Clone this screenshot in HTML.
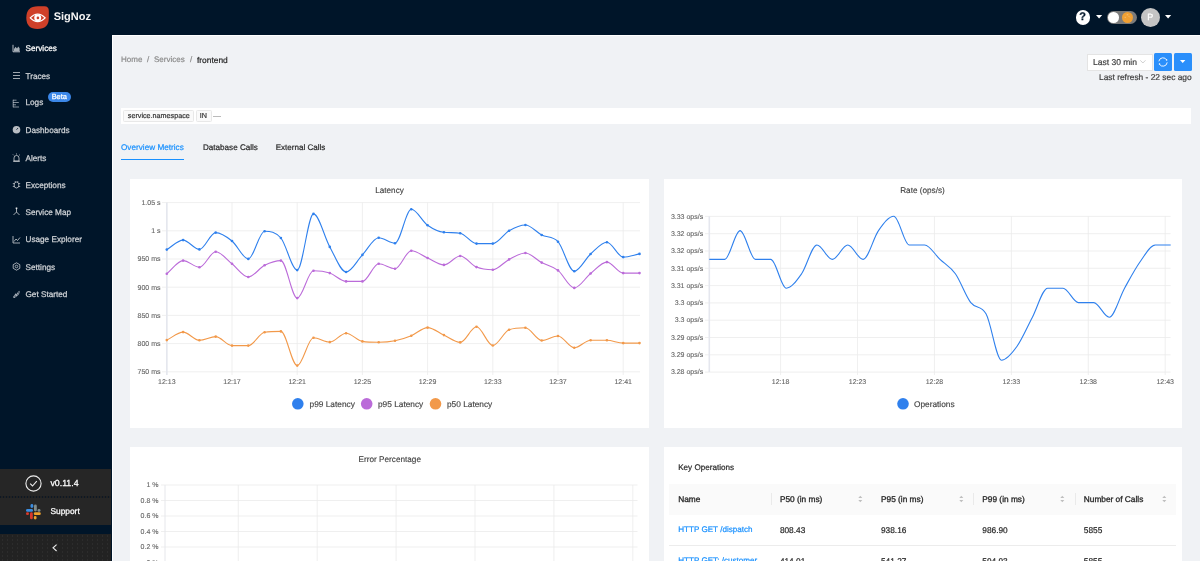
<!DOCTYPE html>
<html><head><meta charset="utf-8">
<style>
*{margin:0;padding:0;box-sizing:border-box}
html,body{width:1200px;height:561px;overflow:hidden;background:#f0f2f5;font-family:"Liberation Sans",sans-serif;}
body{will-change:transform;text-rendering:geometricPrecision}
.txt{-webkit-text-stroke:0.2px currentColor}
.mi span,#side .txt,#hdr .txt{-webkit-text-stroke:0.25px currentColor}
svg text{stroke-width:0.2px}
.abs{position:absolute}
#hdr{position:absolute;left:0;top:0;width:1200px;height:35px;background:#001529}
#side{position:absolute;left:0;top:35px;width:112px;height:526px;background:#001529}
#content{position:absolute;left:112px;top:35px;width:1088px;height:526px;background:#f0f2f5;border-left:1px solid #fff;border-top:1px solid #fff}
.mi{position:absolute;left:0;width:111px;height:20px;color:rgba(255,255,255,0.72);font-size:8.2px;line-height:20px}
.mi span{position:absolute;left:25.5px;top:-0.7px}
.mi svg{position:absolute;left:11.5px;top:3.6px}
.mi.act{color:#fff}
.card{position:absolute;background:#fff}
svg text{font-family:"Liberation Sans",sans-serif}
.ax{font-size:7px;fill:#666;stroke:#666;stroke-width:0.12px}
.lg{font-size:8.3px;fill:#444;stroke:#444;stroke-width:0.15px}
.tt{font-size:8.2px;fill:#404040;stroke:#404040;stroke-width:0.12px}
.txt{position:absolute;white-space:nowrap;line-height:1}
th,td{font-weight:normal}
</style></head><body>
<div id="hdr">
  <!-- logo -->
  <svg class="abs" style="left:26px;top:6px" width="24" height="24" viewBox="0 0 24 24">
    <path d="M12 0.3 L18.5 0.3 Q22.8 0.3 22.8 4.8 L22.8 12 Q22.8 23 11.5 23 Q0.3 23 0.3 11.8 Q0.3 0.3 12 0.3 Z" fill="#cf4029"/>
    <path d="M4.2 11.8 Q11.7 4.2 19.2 11.8 Q11.7 19.4 4.2 11.8 Z" fill="#cf4029" stroke="#fff" stroke-width="1.1"/>
    <circle cx="11.7" cy="11.8" r="3.5" fill="#fff"/>
    <circle cx="11.9" cy="11.9" r="1.3" fill="#cf4029"/>
  </svg>
  <div class="txt" style="left:53.7px;top:12.3px;font-size:11px;font-weight:bold;color:#f4f4f4;-webkit-text-stroke:0">SigNoz</div>
  <!-- right icons -->
  <div class="abs" style="left:1075.7px;top:9.8px;width:14.8px;height:14.8px;border-radius:50%;background:#fff"></div>
  <div class="txt" style="left:1079.2px;top:11.7px;font-size:11px;font-weight:bold;color:#001529">?</div>
  <svg class="abs" style="left:1096px;top:14.5px" width="7" height="4"><path d="M0 0 L6.2 0 L3.1 3.4 Z" fill="#fff"/></svg>
  <div class="abs" style="left:1107px;top:11px;width:30px;height:13px;border-radius:6.5px;background:#7b7b7b"></div>
  <div class="abs" style="left:1108.3px;top:12.2px;width:10.6px;height:10.6px;border-radius:50%;background:#fff"></div>
  <div class="abs" style="left:1122.2px;top:12.2px;width:11px;height:11px;border-radius:50%;background:#f0a033"></div>
  <svg class="abs" style="left:1122.2px;top:12.2px" width="11" height="11" viewBox="0 0 11 11"><path d="M4.7 2.8H6.3M3.2 4.8V6M6.8 4.3L7.8 5.3" stroke="rgba(255,255,255,0.6)" stroke-width="0.6"/></svg>
  <div class="abs" style="left:1141px;top:7.8px;width:19px;height:19px;border-radius:50%;background:#c4c4c4"></div>
  <div class="txt" style="left:1147.3px;top:12.8px;font-size:9px;color:#fff">P</div>
  <svg class="abs" style="left:1165px;top:14.5px" width="7" height="4"><path d="M0 0 L6.2 0 L3.1 3.4 Z" fill="#fff"/></svg>
</div>

<div id="side">
  <div class="mi act" style="top:5.0px"><svg width="9" height="9" viewBox="0 0 9 9"><path d="M1 0.8V7.8H8" stroke="#dfe3e8" stroke-width="0.8" fill="none"/><path d="M2 7.2V5L3.6 2.8L5 4.6L6.3 2.5L7.6 4.2V7.2Z" fill="rgba(220,225,230,0.75)"/></svg><span>Services</span></div>
  <div class="mi" style="top:32.3px"><svg width="9" height="9" viewBox="0 0 9 9"><path d="M1 1.5H8M1 4.5H8M1 7.5H8" stroke="rgba(255,255,255,0.7)" stroke-width="0.9" fill="none"/></svg><span>Traces</span></div>
  <div class="mi" style="top:59px"><svg width="9" height="9" viewBox="0 0 9 9" style="left:11.8px;top:4.5px"><path d="M1.2 0.8V8.2" stroke="rgba(200,205,215,0.55)" stroke-width="1.2"/><path d="M1 1.2H4.5M1 3.5H6.8M1 5.8H4M1 8H7" stroke="rgba(220,225,230,0.75)" stroke-width="0.8" fill="none"/></svg><span>Logs</span></div>
  <div class="abs" style="left:47.5px;top:57px;width:23.5px;height:10px;border-radius:5px;background:#3b87e8;color:#fff;font-size:7.4px;line-height:10px;text-align:center;-webkit-text-stroke:0.25px #fff">Beta</div>
  <div class="mi" style="top:86.9px"><svg width="9" height="9" viewBox="0 0 9 9"><circle cx="4.5" cy="4.7" r="3.8" fill="rgba(255,255,255,0.72)"/><path d="M4.5 4.7 L6 3" stroke="#001529" stroke-width="0.8"/></svg><span>Dashboards</span></div>
  <div class="mi" style="top:114.2px"><svg width="9" height="9" viewBox="0 0 9 9"><path d="M2 8V5 Q2 2.5 4.5 2.5 Q7 2.5 7 5V8Z M1 8.3H8M4.5 0.5V1.5M1 1.5L1.8 2.3M8 1.5L7.2 2.3" stroke="rgba(255,255,255,0.7)" stroke-width="0.9" fill="none"/></svg><span>Alerts</span></div>
  <div class="mi" style="top:141.5px"><svg width="9" height="9" viewBox="0 0 9 9"><ellipse cx="4.5" cy="5" rx="2.4" ry="3" stroke="rgba(255,255,255,0.7)" stroke-width="0.9" fill="none"/><path d="M0.8 3.5H2M7 3.5H8.2M0.8 6.5H2M7 6.5H8.2M3 1L3.5 2M6 1L5.5 2" stroke="rgba(255,255,255,0.7)" stroke-width="0.8"/></svg><span>Exceptions</span></div>
  <div class="mi" style="top:168.8px"><svg width="9" height="9" viewBox="0 0 9 9"><path d="M4.5 1V5M4.5 5L1.5 8M4.5 5L7.5 8" stroke="rgba(255,255,255,0.7)" stroke-width="0.9" fill="none"/><circle cx="4.5" cy="1.3" r="1" fill="rgba(255,255,255,0.7)"/></svg><span>Service Map</span></div>
  <div class="mi" style="top:196.1px"><svg width="9" height="9" viewBox="0 0 9 9"><path d="M1 1V8H8M2 6.5L4 4L5.5 5.5L8 2.5" stroke="rgba(255,255,255,0.7)" stroke-width="0.9" fill="none"/></svg><span>Usage Explorer</span></div>
  <div class="mi" style="top:223.4px"><svg width="9" height="9" viewBox="0 0 9 9"><path d="M4.5 0.8L7.8 2.7V6.3L4.5 8.2L1.2 6.3V2.7Z" stroke="rgba(255,255,255,0.7)" stroke-width="0.9" fill="none"/><circle cx="4.5" cy="4.5" r="1.3" stroke="rgba(255,255,255,0.7)" stroke-width="0.8" fill="none"/></svg><span>Settings</span></div>
  <div class="mi" style="top:250.7px"><svg width="9" height="9" viewBox="0 0 9 9" style="left:11.5px;top:4.6px"><path d="M7.6 0.8Q8 3.5 6.2 5.2L4.8 3.8Q5.5 1.6 7.6 0.8Z" fill="rgba(215,220,228,0.8)"/><path d="M3.8 3.2L5.9 5.4L2.4 7.9Q0.9 8.2 1.2 6.8Z" fill="rgba(215,220,228,0.8)"/><circle cx="6.3" cy="2.8" r="0.6" fill="#001529"/><circle cx="3.1" cy="6.1" r="0.7" fill="#001529"/></svg><span>Get Started</span></div>

  <div class="abs" style="left:0;top:434.4px;width:111px;height:27.5px;background:#262626"></div>
  <div class="abs" style="left:0;top:460.8px;width:111px;height:2px;background:repeating-linear-gradient(90deg,#0e1824 0 1.5px,#222 1.5px 3px)"></div>
  <div class="abs" style="left:0;top:462.8px;width:111px;height:27px;background:#262626"></div>
  <div class="abs" style="left:0;top:499.4px;width:111px;height:27px;background:#222 radial-gradient(circle,rgba(255,255,255,0.045) 0.6px,transparent 0.9px) 0 0/5px 4px"></div>
  <svg class="abs" style="left:24.5px;top:439.7px" width="17" height="17" viewBox="0 0 17 17"><circle cx="8.5" cy="8.5" r="7.6" stroke="#eee" stroke-width="1.1" fill="none"/><path d="M5.2 8.7L7.5 11L11.8 6.2" stroke="#eee" stroke-width="1.1" fill="none"/></svg>
  <div class="txt" style="left:50.4px;top:443.5px;font-size:8.8px;color:#fff">v0.11.4</div>
  <svg class="abs" style="left:25px;top:467.5px" width="17" height="17" viewBox="0 0 17 17">
    <rect x="6.5" y="1" width="2.6" height="7" rx="1.3" fill="#36c5f0" opacity="0"/>
    <rect x="1" y="6" width="7" height="2.8" rx="1.4" fill="#3b8de0"/>
    <rect x="5.5" y="1" width="2.8" height="4" rx="1.4" fill="#3b8de0"/>
    <rect x="9" y="1.5" width="2.8" height="7" rx="1.4" fill="#7f8c8d"/>
    <rect x="12.5" y="6" width="3" height="2.8" rx="1.4" fill="#7f8c8d"/>
    <rect x="1" y="9.3" width="3" height="2.8" rx="1.4" fill="#d8392b"/>
    <rect x="5" y="9.3" width="2.8" height="7" rx="1.4" fill="#d8392b"/>
    <rect x="8.8" y="9.3" width="7" height="2.8" rx="1.4" fill="#eea12b"/>
    <rect x="8.8" y="13" width="2.8" height="3.5" rx="1.4" fill="#eea12b"/>
  </svg>
  <div class="txt" style="left:50.4px;top:471.5px;font-size:8.4px;color:#fff">Support</div>
  <svg class="abs" style="left:52.3px;top:508.8px" width="6" height="8"><path d="M4.6 0.6L1.1 3.8L4.6 7" stroke="#e8e8e8" stroke-width="1.15" fill="none"/></svg>
</div>

<div id="content"></div>

<!-- breadcrumb -->
<div class="txt" style="left:121px;top:55.5px;font-size:8px;color:#8c8c8c">Home</div>
<div class="txt" style="left:147px;top:55.5px;font-size:8px;color:#8c8c8c">/</div>
<div class="txt" style="left:154px;top:55.5px;font-size:8px;color:#8c8c8c">Services</div>
<div class="txt" style="left:190px;top:55.5px;font-size:8px;color:#8c8c8c">/</div>
<div class="txt" style="left:197px;top:55.5px;font-size:8.4px;color:#262626">frontend</div>

<!-- time picker -->
<div class="abs" style="left:1087px;top:53.6px;width:66px;height:17px;background:#fff;border:1px solid #e4e4e4"></div>
<div class="txt" style="left:1093px;top:57.5px;font-size:8.5px;color:#404040">Last 30 min</div>
<svg class="abs" style="left:1140px;top:60px" width="6" height="4"><path d="M0.3 0.3L2.9 3L5.5 0.3" stroke="#bbb" stroke-width="0.7" fill="none"/></svg>
<div class="abs" style="left:1154px;top:52.8px;width:18px;height:18.2px;background:#2a8ffb;border-radius:1.5px"></div>
<svg class="abs" style="left:1158.4px;top:57.3px" width="10" height="10" viewBox="0 0 10 10"><path d="M0.86 4.27 A4.2 4.2 0 0 1 8.71 3.03 M9.18 5.37 A4.2 4.2 0 0 1 1.36 7.1" stroke="#fff" stroke-width="0.9" fill="none"/><circle cx="8.6" cy="3.1" r="0.75" fill="#fff"/><circle cx="1.5" cy="7" r="0.75" fill="#fff"/></svg>
<div class="abs" style="left:1173.9px;top:52.8px;width:18px;height:18.2px;background:#2a8ffb;border-radius:1.5px"></div>
<svg class="abs" style="left:1180px;top:60px" width="6" height="4"><path d="M0 0 L5.4 0 L2.7 3 Z" fill="#fff"/></svg>
<div class="txt" style="left:1099px;top:73.3px;font-size:8.4px;color:#404040">Last refresh - 22 sec ago</div>

<!-- filter bar -->
<div class="abs" style="left:121px;top:108px;width:1070px;height:16px;background:#fff"></div>
<div class="abs" style="left:123.3px;top:110px;width:71px;height:12px;background:#fafafa;border:1px solid #e8e8e8;border-radius:1.5px"></div>
<div class="txt" style="left:127.8px;top:112.4px;font-size:7.2px;color:#333">service.namespace</div>
<div class="abs" style="left:195.5px;top:110px;width:16px;height:12px;background:#fafafa;border:1px solid #e8e8e8;border-radius:1.5px"></div>
<div class="txt" style="left:199.8px;top:112.4px;font-size:7.2px;color:#333">IN</div>
<div class="abs" style="left:212.5px;top:115.6px;width:8.5px;height:0.8px;background:#bbb"></div>

<!-- tabs -->
<div class="txt" style="left:121px;top:144px;font-size:8.2px;color:#1890ff">Overview Metrics</div>
<div class="txt" style="left:203px;top:144px;font-size:8.1px;color:#262626">Database Calls</div>
<div class="txt" style="left:275.7px;top:144px;font-size:8.05px;color:#262626">External Calls</div>
<div class="abs" style="left:121px;top:158.5px;width:63.2px;height:1.5px;background:#1890ff"></div>

<!-- cards -->
<div class="card" style="left:130px;top:179px;width:519px;height:249px"></div>
<div class="card" style="left:664px;top:179px;width:518px;height:249px"></div>
<div class="card" style="left:130px;top:447px;width:519px;height:120px"></div>
<div class="card" style="left:664px;top:447px;width:518px;height:120px"></div>

<svg class="abs" style="left:0;top:0" width="1200" height="561">
<line x1="162" y1="202.6" x2="640" y2="202.6" stroke="#ebebeb" stroke-width="0.8"/>
<text x="160.5" y="204.9" class="ax" text-anchor="end">1.05 s</text>
<line x1="162" y1="230.8" x2="640" y2="230.8" stroke="#ebebeb" stroke-width="0.8"/>
<text x="160.5" y="233.1" class="ax" text-anchor="end">1 s</text>
<line x1="162" y1="259" x2="640" y2="259" stroke="#ebebeb" stroke-width="0.8"/>
<text x="160.5" y="261.3" class="ax" text-anchor="end">950 ms</text>
<line x1="162" y1="287.2" x2="640" y2="287.2" stroke="#ebebeb" stroke-width="0.8"/>
<text x="160.5" y="289.5" class="ax" text-anchor="end">900 ms</text>
<line x1="162" y1="315.4" x2="640" y2="315.4" stroke="#ebebeb" stroke-width="0.8"/>
<text x="160.5" y="317.7" class="ax" text-anchor="end">850 ms</text>
<line x1="162" y1="343.6" x2="640" y2="343.6" stroke="#ebebeb" stroke-width="0.8"/>
<text x="160.5" y="345.9" class="ax" text-anchor="end">800 ms</text>
<line x1="162" y1="371.8" x2="640" y2="371.8" stroke="#ebebeb" stroke-width="0.8"/>
<text x="160.5" y="374.1" class="ax" text-anchor="end">750 ms</text>
<line x1="166.8" y1="202.6" x2="166.8" y2="375" stroke="#ebebeb" stroke-width="0.8"/>
<text x="166.8" y="384" class="ax" text-anchor="middle">12:13</text>
<line x1="232" y1="202.6" x2="232" y2="375" stroke="#ebebeb" stroke-width="0.8"/>
<text x="232" y="384" class="ax" text-anchor="middle">12:17</text>
<line x1="297.2" y1="202.6" x2="297.2" y2="375" stroke="#ebebeb" stroke-width="0.8"/>
<text x="297.2" y="384" class="ax" text-anchor="middle">12:21</text>
<line x1="362.4" y1="202.6" x2="362.4" y2="375" stroke="#ebebeb" stroke-width="0.8"/>
<text x="362.4" y="384" class="ax" text-anchor="middle">12:25</text>
<line x1="427.6" y1="202.6" x2="427.6" y2="375" stroke="#ebebeb" stroke-width="0.8"/>
<text x="427.6" y="384" class="ax" text-anchor="middle">12:29</text>
<line x1="492.8" y1="202.6" x2="492.8" y2="375" stroke="#ebebeb" stroke-width="0.8"/>
<text x="492.8" y="384" class="ax" text-anchor="middle">12:33</text>
<line x1="558" y1="202.6" x2="558" y2="375" stroke="#ebebeb" stroke-width="0.8"/>
<text x="558" y="384" class="ax" text-anchor="middle">12:37</text>
<line x1="623.2" y1="202.6" x2="623.2" y2="375" stroke="#ebebeb" stroke-width="0.8"/>
<text x="623.2" y="384" class="ax" text-anchor="middle">12:41</text>
<line x1="166.8" y1="202.6" x2="166.8" y2="375" stroke="#e5e7ee" stroke-width="1.6"/>
<path d="M166.80 340.10 C172.23 337.43 177.67 332.10 183.10 332.10 C188.53 332.10 193.97 340.30 199.40 340.30 C204.83 340.30 210.27 336.60 215.70 336.60 C221.13 336.60 226.57 345.60 232.00 345.60 C237.43 345.60 242.87 345.60 248.30 345.60 C253.73 345.60 259.17 333.20 264.60 332.30 C270.03 331.40 275.47 331.40 280.90 331.40 C286.33 331.40 291.77 365.60 297.20 365.60 C302.63 365.60 308.07 337.80 313.50 337.80 C318.93 337.80 324.37 342.10 329.80 342.10 C335.23 342.10 340.67 333.20 346.10 333.20 C351.53 333.20 356.97 340.50 362.40 341.40 C367.83 342.30 373.27 342.30 378.70 342.30 C384.13 342.30 389.57 341.90 395.00 340.80 C400.43 339.70 405.87 337.90 411.30 335.70 C416.73 333.50 422.17 327.60 427.60 327.60 C433.03 327.60 438.47 332.63 443.90 335.10 C449.33 337.57 454.77 342.40 460.20 342.40 C465.63 342.40 471.07 326.80 476.50 326.80 C481.93 326.80 487.37 345.50 492.80 345.50 C498.23 345.50 503.67 331.80 509.10 329.80 C514.53 327.80 519.97 327.80 525.40 327.80 C530.83 327.80 536.27 340.50 541.70 340.50 C547.13 340.50 552.57 336.00 558.00 336.00 C563.43 336.00 568.87 347.80 574.30 347.80 C579.73 347.80 585.17 340.30 590.60 340.30 C596.03 340.30 601.47 340.30 606.90 340.30 C612.33 340.30 617.77 343.10 623.20 343.10 C628.63 343.10 634.07 343.10 639.50 343.10" fill="none" stroke="#F2994A" stroke-width="1.1"/>
<circle cx="166.8" cy="340.1" r="1.3" fill="#F2994A"/>
<circle cx="183.1" cy="332.1" r="1.3" fill="#F2994A"/>
<circle cx="199.4" cy="340.3" r="1.3" fill="#F2994A"/>
<circle cx="215.7" cy="336.6" r="1.3" fill="#F2994A"/>
<circle cx="232" cy="345.6" r="1.3" fill="#F2994A"/>
<circle cx="248.3" cy="345.6" r="1.3" fill="#F2994A"/>
<circle cx="264.6" cy="332.3" r="1.3" fill="#F2994A"/>
<circle cx="280.9" cy="331.4" r="1.3" fill="#F2994A"/>
<circle cx="297.2" cy="365.6" r="1.3" fill="#F2994A"/>
<circle cx="313.5" cy="337.8" r="1.3" fill="#F2994A"/>
<circle cx="329.8" cy="342.1" r="1.3" fill="#F2994A"/>
<circle cx="346.1" cy="333.2" r="1.3" fill="#F2994A"/>
<circle cx="362.4" cy="341.4" r="1.3" fill="#F2994A"/>
<circle cx="378.7" cy="342.3" r="1.3" fill="#F2994A"/>
<circle cx="395" cy="340.8" r="1.3" fill="#F2994A"/>
<circle cx="411.3" cy="335.7" r="1.3" fill="#F2994A"/>
<circle cx="427.6" cy="327.6" r="1.3" fill="#F2994A"/>
<circle cx="443.9" cy="335.1" r="1.3" fill="#F2994A"/>
<circle cx="460.2" cy="342.4" r="1.3" fill="#F2994A"/>
<circle cx="476.5" cy="326.8" r="1.3" fill="#F2994A"/>
<circle cx="492.8" cy="345.5" r="1.3" fill="#F2994A"/>
<circle cx="509.1" cy="329.8" r="1.3" fill="#F2994A"/>
<circle cx="525.4" cy="327.8" r="1.3" fill="#F2994A"/>
<circle cx="541.7" cy="340.5" r="1.3" fill="#F2994A"/>
<circle cx="558" cy="336" r="1.3" fill="#F2994A"/>
<circle cx="574.3" cy="347.8" r="1.3" fill="#F2994A"/>
<circle cx="590.6" cy="340.3" r="1.3" fill="#F2994A"/>
<circle cx="606.9" cy="340.3" r="1.3" fill="#F2994A"/>
<circle cx="623.2" cy="343.1" r="1.3" fill="#F2994A"/>
<circle cx="639.5" cy="343.1" r="1.3" fill="#F2994A"/>
<path d="M166.80 273.70 C172.23 269.33 177.67 260.60 183.10 260.60 C188.53 260.60 193.97 267.20 199.40 267.20 C204.83 267.20 210.27 251.70 215.70 251.70 C221.13 251.70 226.57 259.58 232.00 263.80 C237.43 268.02 242.87 277.00 248.30 277.00 C253.73 277.00 259.17 268.03 264.60 265.30 C270.03 262.57 275.47 260.60 280.90 260.60 C286.33 260.60 291.77 298.10 297.20 298.10 C302.63 298.10 308.07 270.80 313.50 270.80 C318.93 270.80 324.37 271.33 329.80 273.10 C335.23 274.87 340.67 281.40 346.10 281.40 C351.53 281.40 356.97 281.40 362.40 281.40 C367.83 281.40 373.27 263.80 378.70 263.80 C384.13 263.80 389.57 268.70 395.00 268.70 C400.43 268.70 405.87 250.70 411.30 250.70 C416.73 250.70 422.17 255.63 427.60 258.00 C433.03 260.37 438.47 264.90 443.90 264.90 C449.33 264.90 454.77 256.00 460.20 256.00 C465.63 256.00 471.07 264.82 476.50 267.10 C481.93 269.38 487.37 269.70 492.80 269.70 C498.23 269.70 503.67 262.18 509.10 259.40 C514.53 256.62 519.97 253.00 525.40 253.00 C530.83 253.00 536.27 259.70 541.70 262.60 C547.13 265.50 552.57 266.18 558.00 270.40 C563.43 274.62 568.87 287.90 574.30 287.90 C579.73 287.90 585.17 277.80 590.60 273.50 C596.03 269.20 601.47 262.10 606.90 262.10 C612.33 262.10 617.77 273.10 623.20 273.10 C628.63 273.10 634.07 273.10 639.50 273.10" fill="none" stroke="#BB6BD9" stroke-width="1.1"/>
<circle cx="166.8" cy="273.7" r="1.3" fill="#BB6BD9"/>
<circle cx="183.1" cy="260.6" r="1.3" fill="#BB6BD9"/>
<circle cx="199.4" cy="267.2" r="1.3" fill="#BB6BD9"/>
<circle cx="215.7" cy="251.7" r="1.3" fill="#BB6BD9"/>
<circle cx="232" cy="263.8" r="1.3" fill="#BB6BD9"/>
<circle cx="248.3" cy="277" r="1.3" fill="#BB6BD9"/>
<circle cx="264.6" cy="265.3" r="1.3" fill="#BB6BD9"/>
<circle cx="280.9" cy="260.6" r="1.3" fill="#BB6BD9"/>
<circle cx="297.2" cy="298.1" r="1.3" fill="#BB6BD9"/>
<circle cx="313.5" cy="270.8" r="1.3" fill="#BB6BD9"/>
<circle cx="329.8" cy="273.1" r="1.3" fill="#BB6BD9"/>
<circle cx="346.1" cy="281.4" r="1.3" fill="#BB6BD9"/>
<circle cx="362.4" cy="281.4" r="1.3" fill="#BB6BD9"/>
<circle cx="378.7" cy="263.8" r="1.3" fill="#BB6BD9"/>
<circle cx="395" cy="268.7" r="1.3" fill="#BB6BD9"/>
<circle cx="411.3" cy="250.7" r="1.3" fill="#BB6BD9"/>
<circle cx="427.6" cy="258" r="1.3" fill="#BB6BD9"/>
<circle cx="443.9" cy="264.9" r="1.3" fill="#BB6BD9"/>
<circle cx="460.2" cy="256" r="1.3" fill="#BB6BD9"/>
<circle cx="476.5" cy="267.1" r="1.3" fill="#BB6BD9"/>
<circle cx="492.8" cy="269.7" r="1.3" fill="#BB6BD9"/>
<circle cx="509.1" cy="259.4" r="1.3" fill="#BB6BD9"/>
<circle cx="525.4" cy="253" r="1.3" fill="#BB6BD9"/>
<circle cx="541.7" cy="262.6" r="1.3" fill="#BB6BD9"/>
<circle cx="558" cy="270.4" r="1.3" fill="#BB6BD9"/>
<circle cx="574.3" cy="287.9" r="1.3" fill="#BB6BD9"/>
<circle cx="590.6" cy="273.5" r="1.3" fill="#BB6BD9"/>
<circle cx="606.9" cy="262.1" r="1.3" fill="#BB6BD9"/>
<circle cx="623.2" cy="273.1" r="1.3" fill="#BB6BD9"/>
<circle cx="639.5" cy="273.1" r="1.3" fill="#BB6BD9"/>
<path d="M166.80 249.60 C172.23 246.43 177.67 240.10 183.10 240.10 C188.53 240.10 193.97 249.40 199.40 249.40 C204.83 249.40 210.27 232.60 215.70 232.60 C221.13 232.60 226.57 236.62 232.00 241.00 C237.43 245.38 242.87 258.90 248.30 258.90 C253.73 258.90 259.17 231.20 264.60 231.20 C270.03 231.20 275.47 231.52 280.90 238.00 C286.33 244.48 291.77 270.10 297.20 270.10 C302.63 270.10 308.07 213.90 313.50 213.90 C318.93 213.90 324.37 237.22 329.80 246.90 C335.23 256.58 340.67 272.00 346.10 272.00 C351.53 272.00 356.97 260.60 362.40 254.90 C367.83 249.20 373.27 237.80 378.70 237.80 C384.13 237.80 389.57 243.20 395.00 243.20 C400.43 243.20 405.87 209.30 411.30 209.30 C416.73 209.30 422.17 221.47 427.60 225.30 C433.03 229.13 438.47 231.78 443.90 232.30 C449.33 232.82 454.77 232.46 460.20 233.20 C465.63 233.94 471.07 243.60 476.50 243.60 C481.93 243.60 487.37 243.60 492.80 243.60 C498.23 243.60 503.67 233.80 509.10 230.70 C514.53 227.60 519.97 225.00 525.40 225.00 C530.83 225.00 536.27 232.22 541.70 235.00 C547.13 237.78 552.57 235.67 558.00 241.70 C563.43 247.73 568.87 271.20 574.30 271.20 C579.73 271.20 585.17 258.82 590.60 254.00 C596.03 249.18 601.47 242.30 606.90 242.30 C612.33 242.30 617.77 257.10 623.20 257.10 C628.63 257.10 634.07 254.97 639.50 253.90" fill="none" stroke="#2F80ED" stroke-width="1.1"/>
<circle cx="166.8" cy="249.6" r="1.3" fill="#2F80ED"/>
<circle cx="183.1" cy="240.1" r="1.3" fill="#2F80ED"/>
<circle cx="199.4" cy="249.4" r="1.3" fill="#2F80ED"/>
<circle cx="215.7" cy="232.6" r="1.3" fill="#2F80ED"/>
<circle cx="232" cy="241" r="1.3" fill="#2F80ED"/>
<circle cx="248.3" cy="258.9" r="1.3" fill="#2F80ED"/>
<circle cx="264.6" cy="231.2" r="1.3" fill="#2F80ED"/>
<circle cx="280.9" cy="238" r="1.3" fill="#2F80ED"/>
<circle cx="297.2" cy="270.1" r="1.3" fill="#2F80ED"/>
<circle cx="313.5" cy="213.9" r="1.3" fill="#2F80ED"/>
<circle cx="329.8" cy="246.9" r="1.3" fill="#2F80ED"/>
<circle cx="346.1" cy="272" r="1.3" fill="#2F80ED"/>
<circle cx="362.4" cy="254.9" r="1.3" fill="#2F80ED"/>
<circle cx="378.7" cy="237.8" r="1.3" fill="#2F80ED"/>
<circle cx="395" cy="243.2" r="1.3" fill="#2F80ED"/>
<circle cx="411.3" cy="209.3" r="1.3" fill="#2F80ED"/>
<circle cx="427.6" cy="225.3" r="1.3" fill="#2F80ED"/>
<circle cx="443.9" cy="232.3" r="1.3" fill="#2F80ED"/>
<circle cx="460.2" cy="233.2" r="1.3" fill="#2F80ED"/>
<circle cx="476.5" cy="243.6" r="1.3" fill="#2F80ED"/>
<circle cx="492.8" cy="243.6" r="1.3" fill="#2F80ED"/>
<circle cx="509.1" cy="230.7" r="1.3" fill="#2F80ED"/>
<circle cx="525.4" cy="225" r="1.3" fill="#2F80ED"/>
<circle cx="541.7" cy="235" r="1.3" fill="#2F80ED"/>
<circle cx="558" cy="241.7" r="1.3" fill="#2F80ED"/>
<circle cx="574.3" cy="271.2" r="1.3" fill="#2F80ED"/>
<circle cx="590.6" cy="254" r="1.3" fill="#2F80ED"/>
<circle cx="606.9" cy="242.3" r="1.3" fill="#2F80ED"/>
<circle cx="623.2" cy="257.1" r="1.3" fill="#2F80ED"/>
<circle cx="639.5" cy="253.9" r="1.3" fill="#2F80ED"/>
<circle cx="297.8" cy="403.8" r="5.8" fill="#2F80ED"/>
<text x="309.6" y="407" class="lg">p99 Latency</text>
<circle cx="366.7" cy="403.8" r="5.8" fill="#BB6BD9"/>
<text x="378" y="407" class="lg">p95 Latency</text>
<circle cx="435.5" cy="403.8" r="5.8" fill="#F2994A"/>
<text x="447" y="407" class="lg">p50 Latency</text>
<text x="389.5" y="192.8" class="tt" text-anchor="middle">Latency</text>
<line x1="705" y1="216.4" x2="1170.6" y2="216.4" stroke="#ebebeb" stroke-width="0.8"/>
<text x="703.2" y="218.6" class="ax" text-anchor="end">3.33 ops/s</text>
<line x1="705" y1="233.7" x2="1170.6" y2="233.7" stroke="#ebebeb" stroke-width="0.8"/>
<text x="703.2" y="235.9" class="ax" text-anchor="end">3.32 ops/s</text>
<line x1="705" y1="251" x2="1170.6" y2="251" stroke="#ebebeb" stroke-width="0.8"/>
<text x="703.2" y="253.2" class="ax" text-anchor="end">3.32 ops/s</text>
<line x1="705" y1="268.3" x2="1170.6" y2="268.3" stroke="#ebebeb" stroke-width="0.8"/>
<text x="703.2" y="270.5" class="ax" text-anchor="end">3.31 ops/s</text>
<line x1="705" y1="285.6" x2="1170.6" y2="285.6" stroke="#ebebeb" stroke-width="0.8"/>
<text x="703.2" y="287.8" class="ax" text-anchor="end">3.31 ops/s</text>
<line x1="705" y1="302.9" x2="1170.6" y2="302.9" stroke="#ebebeb" stroke-width="0.8"/>
<text x="703.2" y="305.1" class="ax" text-anchor="end">3.3 ops/s</text>
<line x1="705" y1="320.2" x2="1170.6" y2="320.2" stroke="#ebebeb" stroke-width="0.8"/>
<text x="703.2" y="322.4" class="ax" text-anchor="end">3.3 ops/s</text>
<line x1="705" y1="337.5" x2="1170.6" y2="337.5" stroke="#ebebeb" stroke-width="0.8"/>
<text x="703.2" y="339.7" class="ax" text-anchor="end">3.29 ops/s</text>
<line x1="705" y1="354.8" x2="1170.6" y2="354.8" stroke="#ebebeb" stroke-width="0.8"/>
<text x="703.2" y="357" class="ax" text-anchor="end">3.29 ops/s</text>
<line x1="705" y1="372.1" x2="1170.6" y2="372.1" stroke="#ebebeb" stroke-width="0.8"/>
<text x="703.2" y="374.3" class="ax" text-anchor="end">3.28 ops/s</text>
<line x1="780.6" y1="216.4" x2="780.6" y2="375" stroke="#ebebeb" stroke-width="0.8"/>
<text x="780.6" y="384" class="ax" text-anchor="middle">12:18</text>
<line x1="857.52" y1="216.4" x2="857.52" y2="375" stroke="#ebebeb" stroke-width="0.8"/>
<text x="857.52" y="384" class="ax" text-anchor="middle">12:23</text>
<line x1="934.44" y1="216.4" x2="934.44" y2="375" stroke="#ebebeb" stroke-width="0.8"/>
<text x="934.44" y="384" class="ax" text-anchor="middle">12:28</text>
<line x1="1011.36" y1="216.4" x2="1011.36" y2="375" stroke="#ebebeb" stroke-width="0.8"/>
<text x="1011.36" y="384" class="ax" text-anchor="middle">12:33</text>
<line x1="1088.28" y1="216.4" x2="1088.28" y2="375" stroke="#ebebeb" stroke-width="0.8"/>
<text x="1088.28" y="384" class="ax" text-anchor="middle">12:38</text>
<line x1="1165.2" y1="216.4" x2="1165.2" y2="375" stroke="#ebebeb" stroke-width="0.8"/>
<text x="1165.2" y="384" class="ax" text-anchor="middle">12:43</text>
<line x1="709.3" y1="216.4" x2="709.3" y2="372" stroke="#e5e7ee" stroke-width="1.6"/>
<path d="M709.30 259.40 C714.43 259.40 719.55 259.40 724.68 259.40 C729.81 259.40 734.93 230.60 740.06 230.60 C745.19 230.60 750.31 259.40 755.44 259.40 C760.57 259.40 765.69 259.40 770.82 259.40 C775.95 259.40 781.07 288.20 786.20 288.20 C791.33 288.20 796.45 281.00 801.58 273.80 C806.71 266.60 811.83 245.00 816.96 245.00 C822.09 245.00 827.21 259.40 832.34 259.40 C837.47 259.40 842.59 245.00 847.72 245.00 C852.85 245.00 857.97 259.40 863.10 259.40 C868.23 259.40 873.35 237.80 878.48 230.60 C883.61 223.40 888.73 216.20 893.86 216.20 C898.99 216.20 904.11 245.00 909.24 245.00 C914.37 245.00 919.49 245.00 924.62 245.00 C929.75 245.00 934.87 254.60 940.00 259.40 C945.13 264.20 950.25 266.60 955.38 273.80 C960.51 281.00 965.63 296.08 970.76 302.60 C975.89 309.12 981.01 304.65 986.14 314.00 C991.27 323.35 996.39 360.20 1001.52 360.20 C1006.65 360.20 1011.77 353.62 1016.90 346.50 C1022.03 339.38 1027.15 327.22 1032.28 317.50 C1037.41 307.78 1042.53 288.20 1047.66 288.20 C1052.79 288.20 1057.91 288.20 1063.04 288.20 C1068.17 288.20 1073.29 302.60 1078.42 302.60 C1083.55 302.60 1088.67 302.60 1093.80 302.60 C1098.93 302.60 1104.05 317.20 1109.18 317.20 C1114.31 317.20 1119.43 297.40 1124.56 288.20 C1129.69 279.00 1134.81 269.20 1139.94 262.00 C1145.07 254.80 1150.19 245.00 1155.32 245.00 C1160.45 245.00 1165.57 245.00 1170.70 245.00" fill="none" stroke="#2F80ED" stroke-width="1.1"/>
<circle cx="903" cy="403.8" r="5.8" fill="#2F80ED"/>
<text x="914" y="407" class="lg">Operations</text>
<text x="922.5" y="192.8" class="tt" text-anchor="middle">Rate (ops/s)</text>
<line x1="161" y1="485" x2="637.5" y2="485" stroke="#ebebeb" stroke-width="0.8"/>
<text x="158.5" y="487.3" class="ax" text-anchor="end">1 %</text>
<line x1="161" y1="500.5" x2="637.5" y2="500.5" stroke="#ebebeb" stroke-width="0.8"/>
<text x="158.5" y="502.8" class="ax" text-anchor="end">0.8 %</text>
<line x1="161" y1="516" x2="637.5" y2="516" stroke="#ebebeb" stroke-width="0.8"/>
<text x="158.5" y="518.3" class="ax" text-anchor="end">0.6 %</text>
<line x1="161" y1="531.5" x2="637.5" y2="531.5" stroke="#ebebeb" stroke-width="0.8"/>
<text x="158.5" y="533.8" class="ax" text-anchor="end">0.4 %</text>
<line x1="161" y1="547" x2="637.5" y2="547" stroke="#ebebeb" stroke-width="0.8"/>
<text x="158.5" y="549.3" class="ax" text-anchor="end">0.2 %</text>
<line x1="161" y1="562.5" x2="637.5" y2="562.5" stroke="#ebebeb" stroke-width="0.8"/>
<text x="158.5" y="564.8" class="ax" text-anchor="end">0 %</text>
<line x1="238.3" y1="485" x2="238.3" y2="561" stroke="#ebebeb" stroke-width="0.8"/>
<line x1="317.2" y1="485" x2="317.2" y2="561" stroke="#ebebeb" stroke-width="0.8"/>
<line x1="396.1" y1="485" x2="396.1" y2="561" stroke="#ebebeb" stroke-width="0.8"/>
<line x1="475" y1="485" x2="475" y2="561" stroke="#ebebeb" stroke-width="0.8"/>
<line x1="553.9" y1="485" x2="553.9" y2="561" stroke="#ebebeb" stroke-width="0.8"/>
<line x1="632.8" y1="485" x2="632.8" y2="561" stroke="#ebebeb" stroke-width="0.8"/>
<line x1="165" y1="485" x2="165" y2="561" stroke="#e6e7eb" stroke-width="1"/>
<text x="389.8" y="462" class="tt" text-anchor="middle">Error Percentage</text>
</svg>

<!-- key operations table -->
<div class="txt" style="left:678.2px;top:463.8px;font-size:8.1px;color:#262626">Key Operations</div>
<div class="abs" style="left:669px;top:483.6px;width:507px;height:31.5px;background:#fafafa"></div>
<div class="abs" style="left:770.7px;top:493px;width:0.8px;height:12px;background:#eaeaea"></div>
<div class="abs" style="left:972.9px;top:493px;width:0.8px;height:12px;background:#eaeaea"></div>
<div class="abs" style="left:1075px;top:493px;width:0.8px;height:12px;background:#eaeaea"></div>
<div class="abs" style="left:669px;top:545.3px;width:507px;height:0.8px;background:#ececec"></div>
<div class="txt" style="left:678.2px;top:494.8px;font-size:8.3px;color:#262626;-webkit-text-stroke:0.3px #262626">Name</div>
<div class="txt" style="left:779.9px;top:494.8px;font-size:8.3px;color:#262626;-webkit-text-stroke:0.3px #262626">P50 (in ms)</div>
<div class="txt" style="left:881px;top:494.8px;font-size:8.3px;color:#262626;-webkit-text-stroke:0.3px #262626">P95 (in ms)</div>
<div class="txt" style="left:982.3px;top:494.8px;font-size:8.3px;color:#262626;-webkit-text-stroke:0.3px #262626">P99 (in ms)</div>
<div class="txt" style="left:1083.8px;top:494.8px;font-size:8.3px;color:#262626;-webkit-text-stroke:0.3px #262626">Number of Calls</div>
<svg class="abs" style="left:857.5px;top:495px" width="5" height="8"><path d="M0.3 3L2.3 0.8L4.3 3Z M0.3 5L2.3 7.2L4.3 5Z" fill="#bfbfbf"/></svg>
<svg class="abs" style="left:958.8px;top:495px" width="5" height="8"><path d="M0.3 3L2.3 0.8L4.3 3Z M0.3 5L2.3 7.2L4.3 5Z" fill="#bfbfbf"/></svg>
<svg class="abs" style="left:1060.2px;top:495px" width="5" height="8"><path d="M0.3 3L2.3 0.8L4.3 3Z M0.3 5L2.3 7.2L4.3 5Z" fill="#bfbfbf"/></svg>
<svg class="abs" style="left:1161.7px;top:495px" width="5" height="8"><path d="M0.3 3L2.3 0.8L4.3 3Z M0.3 5L2.3 7.2L4.3 5Z" fill="#bfbfbf"/></svg>
<div class="txt" style="left:678.2px;top:526px;font-size:8.1px;color:#1890ff">HTTP GET /dispatch</div>
<div class="txt" style="left:779.9px;top:526px;font-size:8.3px;color:#262626">808.43</div>
<div class="txt" style="left:881px;top:526px;font-size:8.3px;color:#262626">938.16</div>
<div class="txt" style="left:982.3px;top:526px;font-size:8.3px;color:#262626">986.90</div>
<div class="txt" style="left:1083.8px;top:526px;font-size:8.3px;color:#262626">5855</div>
<div class="txt" style="left:678.2px;top:557px;font-size:8.1px;color:#1890ff">HTTP GET: /customer</div>
<div class="txt" style="left:779.9px;top:557px;font-size:8.3px;color:#262626">414.01</div>
<div class="txt" style="left:881px;top:557px;font-size:8.3px;color:#262626">541.27</div>
<div class="txt" style="left:982.3px;top:557px;font-size:8.3px;color:#262626">594.93</div>
<div class="txt" style="left:1083.8px;top:557px;font-size:8.3px;color:#262626">5855</div>

</body></html>
